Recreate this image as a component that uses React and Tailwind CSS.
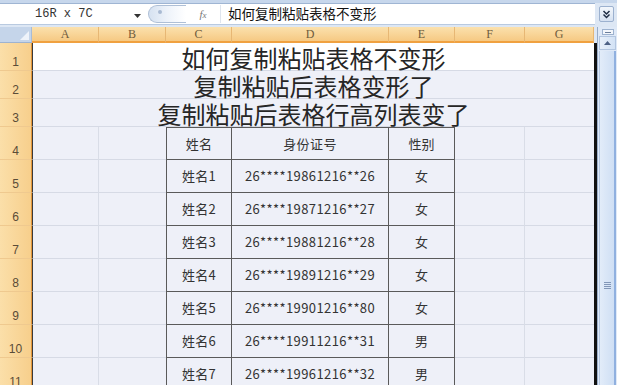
import React from "react";

const CJK = { fontFamily: '"Noto Sans CJK SC", "Noto Sans", sans-serif' };

const cols = [
  { l: "A", w: "w-[67px]" },
  { l: "B", w: "w-[67px]" },
  { l: "C", w: "w-[66px]" },
  { l: "D", w: "w-[157px]" },
  { l: "E", w: "w-[66px]" },
  { l: "F", w: "w-[70px]" },
  { l: "G", w: "w-[69px]" },
];

const rows = [
  ["姓名1", "26****19861216**26", "女"],
  ["姓名2", "26****19871216**27", "女"],
  ["姓名3", "26****19881216**28", "女"],
  ["姓名4", "26****19891216**29", "女"],
  ["姓名5", "26****19901216**80", "女"],
  ["姓名6", "26****19911216**31", "男"],
  ["姓名7", "26****19961216**32", "男"],
];

function RowHead({ n }) {
  return (
    <div className="w-[32px] shrink-0 h-full bg-gradient-to-r from-[#fbdfa9] to-[#f7cf8c] border-r border-r-[#e3963a] border-b border-b-[#efc98f] flex items-end justify-center pb-[1px] text-[12px] leading-[14px] text-[#5a4c38]" style={{ fontFamily: '"Liberation Sans", sans-serif' }}>
      {n}
    </div>
  );
}

function TitleRow({ n, text, white }) {
  return (
    <div className="flex h-[28px] shrink-0">
      <RowHead n={n} />
      <div className={`flex-1 h-full border-l border-l-[#3a3a3a] border-b border-b-[#d6dae5] flex items-center justify-center text-[24px] leading-none text-[#262626] ${white ? "bg-white" : "bg-[#eef0f8]"}`} style={CJK}>
        <span className="relative top-[1px] whitespace-nowrap">{text}</span>
      </div>
    </div>
  );
}

function TableRow({ n, cells, head }) {
  const t = head ? "border-t border-t-[#5a5a5a]" : "";
  return (
    <div className="flex h-[33px] shrink-0">
      <RowHead n={n} />
      <div className="w-[67px] h-full border-l border-l-[#3a3a3a] border-r border-r-[#d9dde7] border-b border-b-[#d6dae5] bg-[#eef0f8]" />
      <div className="w-[67px] h-full border-b border-b-[#d6dae5] bg-[#eef0f8]" />
      <div className={`w-[66px] h-full border-l border-r border-b border-[#5a5a5a] ${t} bg-[#eef0f8] flex items-center justify-center text-[13px] tracking-[0.3px] text-[#333]`} style={CJK}>
        {cells[0]}
      </div>
      <div className={`w-[157px] h-full border-r border-b border-[#5a5a5a] ${t} bg-[#eef0f8] flex items-center justify-center text-[13px] tracking-[0.4px] text-[#333]`} style={CJK}>
        {cells[1]}
      </div>
      <div className={`w-[66px] h-full border-r border-b border-[#5a5a5a] ${t} bg-[#eef0f8] flex items-center justify-center text-[13px] text-[#333]`} style={CJK}>
        {cells[2]}
      </div>
      <div className="w-[70px] h-full border-r border-r-[#d9dde7] border-b border-b-[#d6dae5] bg-[#eef0f8]" />
      <div className="w-[69px] h-full border-b border-b-[#d6dae5] bg-[#eef0f8]" />
    </div>
  );
}

export default function App() {
  return (
    <div className="w-[617px] h-[385px] overflow-hidden bg-[#dde7f4] flex flex-col">
      {/* top strip */}
      <div className="h-[3px] shrink-0 bg-[#c7d7ec]" />
      {/* formula bar */}
      <div className="h-[22px] shrink-0 flex items-stretch">
        <div className="flex-1 flex items-center bg-white border-y border-t-[#9fb5d3] border-b-[#b9cae0]">
          <div className="w-[143px] shrink-0 flex items-center pl-[35px] relative">
            <span className="text-[12px] leading-none text-[#333]" style={{ fontFamily: '"Liberation Mono", monospace' }}>16R x 7C</span>
            <svg className="absolute left-[134px] top-[6px]" width="7" height="4" viewBox="0 0 7 4">
              <path d="M0 0 L7 0 L3.5 4 Z" fill="#333" />
            </svg>
          </div>
          <div className="w-[38px] h-[18px] shrink-0 ml-[5px] rounded-l-full border-l border-y border-[#aebfd6] bg-gradient-to-r from-[#d6e2f1] via-[#eef3fa] to-white relative">
            <div className="absolute left-[9px] top-[4px] w-[4px] h-[4px] rounded-full bg-[#a9bad2]" />
          </div>
          <div className="w-[34px] shrink-0 flex items-center justify-center">
            <span className="italic text-[11px] text-[#777] leading-none" style={{ fontFamily: '"Liberation Serif", serif' }}>f<span className="text-[9px]">x</span></span>
          </div>
          <div className="w-px h-[18px] bg-[#dfe5ee] shrink-0" />
          <div className="pl-[7px] text-[13.5px] leading-none text-[#111] whitespace-nowrap" style={CJK}>
            如何复制粘贴表格不变形
          </div>
        </div>
        <div className="w-[22px] shrink-0 flex items-center justify-center bg-[#dde7f4]">
          <div className="w-[15px] h-[16px] border border-[#9cb1cf] rounded-[2px] bg-gradient-to-b from-[#f3f7fc] to-[#d5e1f1] flex items-center justify-center">
            <svg width="9" height="9" viewBox="0 0 9 9">
              <path d="M1.5 1 L4.5 4 L7.5 1 M1.5 4.5 L4.5 7.5 L7.5 4.5" stroke="#1e2c44" strokeWidth="1.5" fill="none" />
            </svg>
          </div>
        </div>
      </div>
      <div className="h-[2px] shrink-0" />
      {/* main */}
      <div className="flex flex-1 min-h-0">
        <div className="w-[597px] shrink-0 flex flex-col">
          {/* column headers */}
          <div className="flex h-[16px] shrink-0">
            <div className="w-[32px] shrink-0 h-full bg-[#c5d5ea] border-r border-[#a9bcd6] border-b border-b-[#9eb3d0] relative">
              <svg className="absolute right-[2px] bottom-[2px]" width="9" height="9" viewBox="0 0 9 9">
                <path d="M9 0 L9 9 L0 9 Z" fill="#eef3fa" />
              </svg>
            </div>
            {cols.map((c) => (
              <div key={c.l} className={`${c.w} shrink-0 h-full bg-gradient-to-b from-[#fbe1ad] to-[#f6c983] border-r border-r-[#e7b774] border-b-2 border-b-[#f0a140] flex items-center justify-center text-[12px] leading-none text-[#6e5b3c]`} style={{ fontFamily: '"Liberation Serif", serif' }}>
                {c.l}
              </div>
            ))}
          </div>
          {/* body */}
          <div className="flex-1 min-h-0 flex flex-col border-r-[3px] border-r-[#111] overflow-hidden">
            <TitleRow n="1" text="如何复制粘贴表格不变形" white />
            <TitleRow n="2" text="复制粘贴后表格变形了" />
            <TitleRow n="3" text="复制粘贴后表格行高列表变了" />
            <TableRow n="4" cells={["姓名", "身份证号", "性别"]} head />
            {rows.map((r, i) => (
              <TableRow key={i} n={String(i + 5)} cells={r} />
            ))}
          </div>
        </div>
        {/* scrollbar */}
        <div className="flex-1 flex flex-col bg-[#dfe9f7] border-l border-[#98acc8]">
          <div className="h-[9px] shrink-0 flex items-center justify-center pt-[1px]">
            <div className="w-[12px] h-[6px] border border-[#9db2cf] bg-[#f4f7fc] flex items-center justify-center">
              <div className="w-[6px] h-px bg-[#6c7f9c]" />
            </div>
          </div>
          <div className="h-[14px] shrink-0 mx-[1px] border border-[#b3c6e0] bg-gradient-to-r from-[#e8f0fa] to-[#d3e2f5] flex items-center justify-center">
            <svg width="7" height="4" viewBox="0 0 7 4">
              <path d="M0 4 L3.5 0 L7 4 Z" fill="#4d6185" />
            </svg>
          </div>
          <div className="flex-1 mx-[1px] mt-[1px] border-l border-l-[#b6c9e3] border-r-2 border-r-[#90b0df] bg-gradient-to-r from-[#e2ecf9] to-[#cfdff4] flex flex-col items-center">
            <div className="h-[231px] shrink-0" />
            <div className="flex flex-col gap-[1px]">
              <div className="w-[7px] h-px bg-[#8297b8]" />
              <div className="w-[7px] h-px bg-[#8297b8]" />
              <div className="w-[7px] h-px bg-[#8297b8]" />
              <div className="w-[7px] h-px bg-[#8297b8]" />
            </div>
          </div>
        </div>
      </div>
    </div>
  );
}
